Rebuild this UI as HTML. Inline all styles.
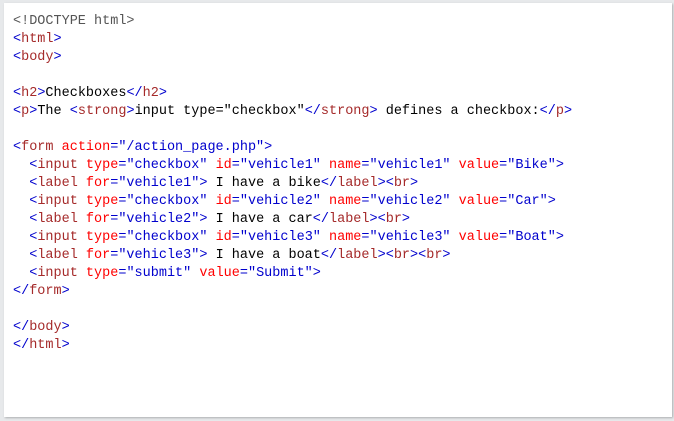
<!DOCTYPE html>
<html><head><style>
html,body{margin:0;padding:0;background:#e7e9eb;width:674px;height:421px;overflow:hidden}
.box{position:absolute;left:4px;top:3px;width:668px;height:414px;background:#fff;box-shadow:1px 1px 2px rgba(0,0,0,.25)}
pre{margin:0;position:absolute;left:9px;top:10px;font-family:"Liberation Mono",monospace;font-size:13.5px;line-height:18px;color:#000}
.b{color:#0000cd}.t{color:#a52a2a}.a{color:#ff0000}.v{color:#0000cd}.d{color:#555}
</style></head><body><div class="box"><pre><span class="d">&lt;!DOCTYPE html&gt;</span>
<span class="b">&lt;</span><span class="t">html</span><span class="b">&gt;</span>
<span class="b">&lt;</span><span class="t">body</span><span class="b">&gt;</span>

<span class="b">&lt;</span><span class="t">h2</span><span class="b">&gt;</span>Checkboxes<span class="b">&lt;/</span><span class="t">h2</span><span class="b">&gt;</span>
<span class="b">&lt;</span><span class="t">p</span><span class="b">&gt;</span>The <span class="b">&lt;</span><span class="t">strong</span><span class="b">&gt;</span>input type="checkbox"<span class="b">&lt;/</span><span class="t">strong</span><span class="b">&gt;</span> defines a checkbox:<span class="b">&lt;/</span><span class="t">p</span><span class="b">&gt;</span>

<span class="b">&lt;</span><span class="t">form</span><span class="a"> action</span><span class="v">="/action_page.php"</span><span class="b">&gt;</span>
  <span class="b">&lt;</span><span class="t">input</span><span class="a"> type</span><span class="v">="checkbox"</span><span class="a"> id</span><span class="v">="vehicle1"</span><span class="a"> name</span><span class="v">="vehicle1"</span><span class="a"> value</span><span class="v">="Bike"</span><span class="b">&gt;</span>
  <span class="b">&lt;</span><span class="t">label</span><span class="a"> for</span><span class="v">="vehicle1"</span><span class="b">&gt;</span> I have a bike<span class="b">&lt;/</span><span class="t">label</span><span class="b">&gt;&lt;</span><span class="t">br</span><span class="b">&gt;</span>
  <span class="b">&lt;</span><span class="t">input</span><span class="a"> type</span><span class="v">="checkbox"</span><span class="a"> id</span><span class="v">="vehicle2"</span><span class="a"> name</span><span class="v">="vehicle2"</span><span class="a"> value</span><span class="v">="Car"</span><span class="b">&gt;</span>
  <span class="b">&lt;</span><span class="t">label</span><span class="a"> for</span><span class="v">="vehicle2"</span><span class="b">&gt;</span> I have a car<span class="b">&lt;/</span><span class="t">label</span><span class="b">&gt;&lt;</span><span class="t">br</span><span class="b">&gt;</span>
  <span class="b">&lt;</span><span class="t">input</span><span class="a"> type</span><span class="v">="checkbox"</span><span class="a"> id</span><span class="v">="vehicle3"</span><span class="a"> name</span><span class="v">="vehicle3"</span><span class="a"> value</span><span class="v">="Boat"</span><span class="b">&gt;</span>
  <span class="b">&lt;</span><span class="t">label</span><span class="a"> for</span><span class="v">="vehicle3"</span><span class="b">&gt;</span> I have a boat<span class="b">&lt;/</span><span class="t">label</span><span class="b">&gt;&lt;</span><span class="t">br</span><span class="b">&gt;&lt;</span><span class="t">br</span><span class="b">&gt;</span>
  <span class="b">&lt;</span><span class="t">input</span><span class="a"> type</span><span class="v">="submit"</span><span class="a"> value</span><span class="v">="Submit"</span><span class="b">&gt;</span>
<span class="b">&lt;/</span><span class="t">form</span><span class="b">&gt;</span>

<span class="b">&lt;/</span><span class="t">body</span><span class="b">&gt;</span>
<span class="b">&lt;/</span><span class="t">html</span><span class="b">&gt;</span></pre></div></body></html>
